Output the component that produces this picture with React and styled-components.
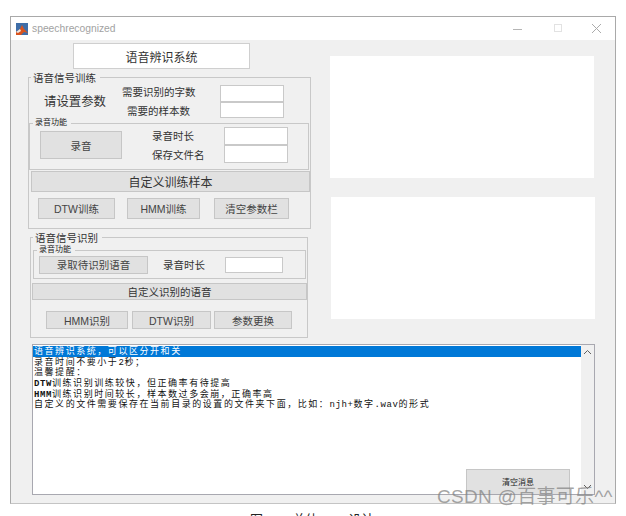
import React from 'react'
import styled, { createGlobalStyle } from 'styled-components'

const UI_FONT = `"Liberation Sans", "Noto Sans CJK SC", sans-serif`

const GlobalStyle = createGlobalStyle`
  html, body {
    margin: 0;
    padding: 0;
    background: #fff;
    width: 626px;
    height: 516px;
    overflow: hidden;
  }
`

const App = () => {
  return (
    <Page>
      <GlobalStyle />
      <Window>
        <TitleBar>
          <AppIcon viewBox="0 0 12 12">
            <rect width="12" height="12" fill="#3f6ea8" />
            <path d="M0 9 L4 6 L6 2 L8 6 L12 10 L8 9 L5 12 L0 12 Z" fill="#d9541e" />
            <path d="M0 9 L4 6 L5 8 L2 10 Z" fill="#e8e8e8" />
          </AppIcon>
          <WindowTitle>speechrecognized</WindowTitle>
          <WindowButtons>
            <svg width="12" height="12" viewBox="0 0 12 12"><path d="M0 6.5H9" stroke="#b5b5b5" /></svg>
            <svg width="12" height="12" viewBox="0 0 12 12"><rect x="2.5" y="1.5" width="7" height="7" fill="none" stroke="#e2e2e2" /></svg>
            <svg width="12" height="12" viewBox="0 0 12 12"><path d="M1 1L10 10M10 1L1 10" stroke="#ababab" /></svg>
          </WindowButtons>
        </TitleBar>
        <Body>
          <Top>
            <LeftColumn>
              <Heading>语音辨识系统</Heading>
              <TrainGroup>
                <GroupTitle>语音信号训练</GroupTitle>
                <ParamRow>
                  <ParamTitle>请设置参数</ParamTitle>
                  <ParamLabels>
                    <Label>需要识别的字数</Label>
                    <Label $indent={5}>需要的样本数</Label>
                  </ParamLabels>
                  <FieldStack>
                    <Field $w={64} $h={17} />
                    <Field $w={64} $h={16} />
                  </FieldStack>
                </ParamRow>
                <RecordGroup>
                  <SmallTitle>录音功能</SmallTitle>
                  <Button $w={82} $h={28}>录音</Button>
                  <RecordLabels>
                    <Label>录音时长</Label>
                    <Label>保存文件名</Label>
                  </RecordLabels>
                  <FieldStack>
                    <Field $w={64} $h={18} />
                    <Field $w={64} $h={18} />
                  </FieldStack>
                </RecordGroup>
                <WideButton $h={21} $size={12} $ml={2} $mt={1}>自定义训练样本</WideButton>
                <ButtonRow>
                  <Button $w={77} $h={21}>DTW训练</Button>
                  <Button $w={73} $h={21} $ml={12}>HMM训练</Button>
                  <Button $w={75} $h={21} $ml={14}>清空参数栏</Button>
                </ButtonRow>
              </TrainGroup>
              <RecognizeGroup>
                <GroupTitle>语音信号识别</GroupTitle>
                <RecognizeRecord>
                  <SmallTitle>录音功能</SmallTitle>
                  <Button $w={109} $h={18}>录取待识别语音</Button>
                  <RecognizeLabel>录音时长</RecognizeLabel>
                  <Field $w={58} $h={16} />
                </RecognizeRecord>
                <WideButton $h={17} $size={10.5} $ml={0} $mt={4}>自定义识别的语音</WideButton>
                <RecognizeButtons>
                  <Button $w={82} $h={18}>HMM识别</Button>
                  <Button $w={79} $h={18} $ml={4}>DTW识别</Button>
                  <Button $w={78} $h={18} $ml={3}>参数更换</Button>
                </RecognizeButtons>
              </RecognizeGroup>
            </LeftColumn>
            <RightColumn>
              <Panel />
              <Panel $ml={1} />
            </RightColumn>
          </Top>
          <LogBox>
            <LogLine $selected>语音辨识系统，可以区分开和关</LogLine>
            <LogLine>录音时间不要小于<Latin>2</Latin>秒；</LogLine>
            <LogLine>温馨提醒：</LogLine>
            <LogLine><Latin $bold>DTW</Latin>训练识别训练较快，但正确率有待提高</LogLine>
            <LogLine><Latin $bold>HMM</Latin>训练识别时间较长，样本数过多会崩，正确率高</LogLine>
            <LogLine>自定义的文件需要保存在当前目录的设置的文件夹下面，比如：<Latin>njh+</Latin>数字<Latin>.wav</Latin>的形式</LogLine>
            <ClearButton>清空消息</ClearButton>
            <ScrollBar>
              <svg width="9" height="6" viewBox="0 0 9 6"><path d="M1 5L4.5 1.5L8 5" fill="none" stroke="#606060" /></svg>
              <svg width="9" height="6" viewBox="0 0 9 6"><path d="M1 1L4.5 4.5L8 1" fill="none" stroke="#606060" /></svg>
            </ScrollBar>
          </LogBox>
        </Body>
      </Window>
      <Caption>图 总体 设计</Caption>
      <Watermark>CSDN @百事可乐^^</Watermark>
    </Page>
  )
}

export default App

const Page = styled.div`
  position: relative;
  width: 626px;
  height: 516px;
  overflow: hidden;
  padding: 16px 0 0 10px;
  box-sizing: border-box;
  font-family: ${UI_FONT};
`;

const Window = styled.div`
  width: 606px;
  height: 488px;
  box-sizing: border-box;
  border: 1px solid #a9a9a9;
  border-bottom-color: #c4c4c4;
  background: #f0f0f0;
  display: flex;
  flex-direction: column;
`;

const TitleBar = styled.div`
  height: 23px;
  flex: none;
  background: #fff;
  display: flex;
  align-items: center;
  padding: 0 12px 0 5px;
`;

const AppIcon = styled.svg`
  width: 12px;
  height: 12px;
`;

const WindowTitle = styled.span`
  margin-left: 4px;
  font: 10.3px "Liberation Sans", sans-serif;
  color: #a2a2a2;
`;

const WindowButtons = styled.div`
  margin-left: auto;
  display: flex;
  gap: 27px;
`;

const Body = styled.div`
  flex: 1;
  min-height: 0;
  display: flex;
  flex-direction: column;
  padding: 3px 20px 8px 17px;
`;

const Top = styled.div`
  display: flex;
  gap: 19px;
`;

const LeftColumn = styled.div`
  width: 283px;
  display: flex;
  flex-direction: column;
`;

const RightColumn = styled.div`
  display: flex;
  flex-direction: column;
  gap: 19px;
  padding-top: 13px;
`;

const Panel = styled.div`
  width: 264px;
  height: 122px;
  margin-left: ${p => p.$ml || 0}px;
  background: #fff;
`;

const Heading = styled.div`
  width: 177px;
  height: 26px;
  margin-left: 45px;
  box-sizing: border-box;
  border: 1px solid #cfcfcf;
  background: #fff;
  font-size: 12px;
  color: #333;
  display: flex;
  align-items: center;
  justify-content: center;
`;

const TrainGroup = styled.div`
  position: relative;
  margin-top: 8px;
  height: 152px;
  box-sizing: border-box;
  border: 1px solid #c8c8c8;
  padding-top: 1px;
`;

const RecognizeGroup = styled.div`
  position: relative;
  margin: 8px 3px 0 2px;
  height: 101px;
  box-sizing: border-box;
  border: 1px solid #c8c8c8;
  padding: 12px 0 0 1px;
`;

const GroupTitle = styled.span`
  position: absolute;
  left: 2px;
  top: -6px;
  padding: 0 4px 0 2px;
  background: #f0f0f0;
  font-size: 10.5px;
  line-height: 13px;
  color: #333;
`;

const SmallTitle = styled.span`
  position: absolute;
  left: 3px;
  top: -6px;
  padding: 0 4px 0 2px;
  background: #f0f0f0;
  font-size: 8px;
  line-height: 10px;
  color: #222;
`;

const ParamRow = styled.div`
  display: flex;
  align-items: center;
  height: 44px;
  padding-left: 15px;
`;

const ParamTitle = styled.div`
  width: 78px;
  font-size: 12.4px;
  white-space: nowrap;
  color: #333;
`;

const ParamLabels = styled.div`
  width: 98px;
  display: flex;
  flex-direction: column;
  gap: 5px;
`;

const Label = styled.div`
  font-size: 10.5px;
  line-height: 14px;
  color: #333;
  margin-left: ${p => p.$indent || 0}px;
  white-space: nowrap;
`;

const RecognizeLabel = styled(Label)`
  width: 47px;
`;

const FieldStack = styled.div`
  display: flex;
  flex-direction: column;
`;

const Field = styled.div`
  width: ${p => p.$w}px;
  height: ${p => p.$h}px;
  flex: none;
  box-sizing: border-box;
  background: #fff;
  border: 1px solid #c9c9c9;
`;

const RecordGroup = styled.div`
  position: relative;
  height: 47px;
  margin-right: 1px;
  box-sizing: border-box;
  border: 1px solid #c8c8c8;
  display: flex;
  align-items: center;
  padding: 0 0 3px 10px;
`;

const RecordLabels = styled.div`
  width: 102px;
  padding-left: 30px;
  box-sizing: border-box;
  display: flex;
  flex-direction: column;
  gap: 5px;
`;

const Button = styled.div`
  width: ${p => p.$w}px;
  height: ${p => p.$h}px;
  margin-left: ${p => p.$ml || 0}px;
  flex: none;
  box-sizing: border-box;
  background: #e1e1e1;
  border: 1px solid #c6c6c6;
  font-size: 10.5px;
  color: #444;
  display: flex;
  align-items: center;
  justify-content: center;
  white-space: nowrap;
`;

const WideButton = styled.div`
  height: ${p => p.$h}px;
  margin: ${p => p.$mt}px 0 0 ${p => p.$ml}px;
  box-sizing: border-box;
  background: #e1e1e1;
  border: 1px solid #c6c6c6;
  font-size: ${p => p.$size}px;
  color: #333;
  display: flex;
  align-items: center;
  justify-content: center;
`;

const ButtonRow = styled.div`
  display: flex;
  padding: 6px 0 0 9px;
`;

const RecognizeRecord = styled.div`
  position: relative;
  height: 29px;
  margin: 0 1px;
  box-sizing: border-box;
  border: 1px solid #c8c8c8;
  display: flex;
  align-items: center;
  padding-left: 5px;
  gap: 15px;
`;

const RecognizeButtons = styled.div`
  display: flex;
  padding: 11px 0 0 14px;
`;

const LogBox = styled.div`
  position: relative;
  margin: 6px 0 0 4px;
  width: 563px;
  flex: 1;
  box-sizing: border-box;
  border: 1px solid #a8a8b0;
  background: #fff;
  padding: 1px 13px 0 0;
  overflow: hidden;
`;

const LogLine = styled.div`
  height: 10.7px;
  font-size: 9px;
  line-height: 10.7px;
  letter-spacing: 1.55px;
  font-family: "Noto Sans CJK SC", "Liberation Mono", monospace;
  white-space: nowrap;
  padding-left: 1px;
  color: ${p => (p.$selected ? '#fff' : '#111')};
  background: ${p => (p.$selected ? '#0078d7' : 'transparent')};
`;

const Latin = styled.span`
  font-family: "Liberation Mono", monospace;
  font-weight: ${p => (p.$bold ? 700 : 400)};
  letter-spacing: 0.6px;
`;

const ClearButton = styled.div`
  position: absolute;
  right: 24px;
  bottom: -2px;
  width: 104px;
  height: 27px;
  box-sizing: border-box;
  padding-bottom: 3px;
  background: #e1e1e1;
  border: 1px solid #c6c6c6;
  font-size: 8px;
  color: #222;
  display: flex;
  align-items: center;
  justify-content: center;
`;

const ScrollBar = styled.div`
  position: absolute;
  right: 0;
  top: 0;
  bottom: 0;
  width: 13px;
  background: #f0f0f0;
  display: flex;
  flex-direction: column;
  align-items: center;
  justify-content: space-between;
  padding: 4px 0;
  box-sizing: border-box;
`;

const Caption = styled.div`
  margin: 8px 0 0 240px;
  font-size: 13px;
  line-height: 16px;
  color: #222;
  white-space: pre;
  word-spacing: 26px;
`;

const Watermark = styled.div`
  position: absolute;
  left: 437px;
  top: 485px;
  font: 19px ${UI_FONT};
  line-height: 24px;
  letter-spacing: 0.3px;
  color: rgba(130, 130, 130, 0.72);
  white-space: nowrap;
`;
